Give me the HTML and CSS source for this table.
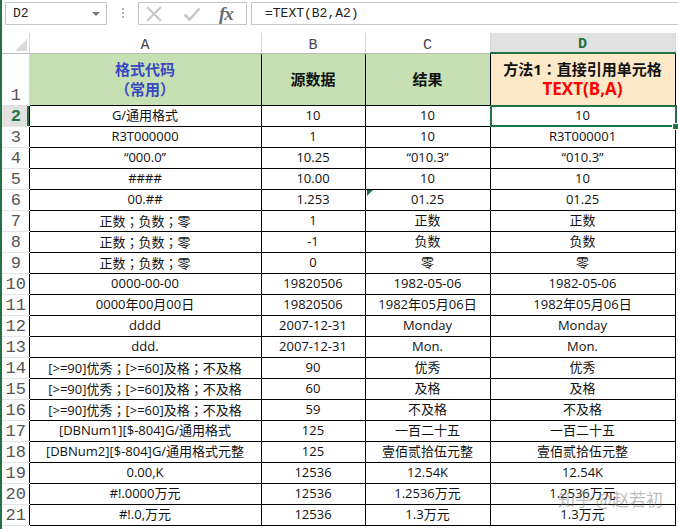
FILE: index.html
```html
<!DOCTYPE html>
<html>
<head>
<meta charset="utf-8">
<link rel="stylesheet" href="styles.css">
</head>
<body>
<div class="app">
  <div class="fbar">
    <div class="namebox"><span>D2</span><span class="nb-arrow"></span></div>
    <div class="grip"><i></i><i></i><i></i></div>
    <div class="fxbox">
      <svg class="ico" width="18" height="18" viewBox="0 0 18 18"><path d="M2 2 L16 16 M16 2 L2 16" stroke="#c8c8c8" stroke-width="2.2" fill="none"/></svg>
      <svg class="ico" width="18" height="18" viewBox="0 0 18 18"><path d="M1.5 9.5 L6.5 14.5 L16.5 3.5" stroke="#c8c8c8" stroke-width="2.6" fill="none"/></svg>
      <span class="fx">fx</span>
    </div>
    <div class="formula">=TEXT(B2,A2)</div>
  </div>
  <table class="sheet">
    <colgroup>
      <col class="c-rh"><col class="c-a"><col class="c-b"><col class="c-c"><col class="c-d">
    </colgroup>
    <thead>
      <tr class="colhdr">
        <th class="corner"><svg width="12" height="12" viewBox="0 0 12 12"><path d="M12 0 L12 12 L0 12 Z" fill="#d9d9d9"/></svg></th>
        <th>A</th><th>B</th><th>C</th><th class="hsel">D</th>
      </tr>
    </thead>
    <tbody>
      <tr class="r1">
        <th class="rh">1</th>
        <td class="hg blue">格式代码<br><span class="fw">（</span>常用<span class="fw">）</span></td>
        <td class="hg">源数据</td>
        <td class="hg">结果</td>
        <td class="ho">方法1<span class="fw">：</span>直接引用单元格<br><span class="red">TEXT(B,A)</span></td>
      </tr>
      <tr><th class="rh rsel">2</th><td>G/通用格式</td><td>10</td><td>10</td><td class="active">10</td></tr>
      <tr><th class="rh">3</th><td>R3T000000</td><td>1</td><td>10</td><td>R3T000001</td></tr>
      <tr><th class="rh">4</th><td>“000.0”</td><td>10.25</td><td>“010.3”</td><td>“010.3”</td></tr>
      <tr><th class="rh">5</th><td>####</td><td>10.00</td><td>10</td><td>10</td></tr>
      <tr><th class="rh">6</th><td>00.##</td><td>1.253</td><td class="err">01.25</td><td>01.25</td></tr>
      <tr><th class="rh">7</th><td>正数<span class="fw">；</span>负数<span class="fw">；</span>零</td><td>1</td><td>正数</td><td>正数</td></tr>
      <tr><th class="rh">8</th><td>正数<span class="fw">；</span>负数<span class="fw">；</span>零</td><td>-1</td><td>负数</td><td>负数</td></tr>
      <tr><th class="rh">9</th><td>正数<span class="fw">；</span>负数<span class="fw">；</span>零</td><td>0</td><td>零</td><td>零</td></tr>
      <tr><th class="rh">10</th><td>0000-00-00</td><td>19820506</td><td>1982-05-06</td><td>1982-05-06</td></tr>
      <tr><th class="rh">11</th><td>0000年00月00日</td><td>19820506</td><td>1982年05月06日</td><td>1982年05月06日</td></tr>
      <tr><th class="rh">12</th><td>dddd</td><td>2007-12-31</td><td>Monday</td><td>Monday</td></tr>
      <tr><th class="rh">13</th><td>ddd.</td><td>2007-12-31</td><td>Mon.</td><td>Mon.</td></tr>
      <tr><th class="rh">14</th><td>[&gt;=90]优秀<span class="fw">；</span>[&gt;=60]及格<span class="fw">；</span>不及格</td><td>90</td><td>优秀</td><td>优秀</td></tr>
      <tr><th class="rh">15</th><td>[&gt;=90]优秀<span class="fw">；</span>[&gt;=60]及格<span class="fw">；</span>不及格</td><td>60</td><td>及格</td><td>及格</td></tr>
      <tr><th class="rh">16</th><td>[&gt;=90]优秀<span class="fw">；</span>[&gt;=60]及格<span class="fw">；</span>不及格</td><td>59</td><td>不及格</td><td>不及格</td></tr>
      <tr><th class="rh">17</th><td>[DBNum1][$-804]G/通用格式</td><td>125</td><td>一百二十五</td><td>一百二十五</td></tr>
      <tr><th class="rh">18</th><td>[DBNum2][$-804]G/通用格式元整</td><td>125</td><td>壹佰贰拾伍元整</td><td>壹佰贰拾伍元整</td></tr>
      <tr><th class="rh">19</th><td>0.00,K</td><td>12536</td><td>12.54K</td><td>12.54K</td></tr>
      <tr><th class="rh">20</th><td>#!.0000万元</td><td>12536</td><td>1.2536万元</td><td>1.2536万元</td></tr>
      <tr><th class="rh">21</th><td>#!.0,万元</td><td>12536</td><td>1.3万元</td><td>1.3万元</td></tr>
    </tbody>
  </table>
  <div class="watermark">知乎 @赵若初</div>
</div>
</body>
</html>
```
FILE: styles.css
```css
html, body {
  margin: 0;
  padding: 0;
}
body {
  width: 678px;
  height: 529px;
  overflow: hidden;
  background: #fff;
}
.app {
  position: relative;
  height: 529px;
  border-left: 2px solid #217346;
  box-sizing: border-box;
  background: #fff;
}
.fbar {
  height: 33px;
  display: flex;
  align-items: flex-start;
  padding-top: 2px;
  box-sizing: border-box;
}
.namebox {
  margin-left: 3px;
  width: 102px;
  height: 23px;
  border: 1px solid #c6c6c6;
  box-sizing: border-box;
  display: flex;
  align-items: center;
  justify-content: space-between;
  padding: 0 6px 0 7px;
  font: 13px "Liberation Mono", monospace;
  color: #222;
}
.nb-arrow {
  width: 0;
  height: 0;
  border-left: 4px solid transparent;
  border-right: 4px solid transparent;
  border-top: 4px solid #7a7a7a;
}
.grip {
  width: 31px;
  display: flex;
  flex-direction: column;
  align-items: center;
  gap: 2px;
  padding-top: 6px;
}
.grip i {
  display: block;
  width: 2px;
  height: 2px;
  background: #b4b4b4;
}
.fxbox {
  width: 109px;
  height: 23px;
  border: 1px solid #c6c6c6;
  box-sizing: border-box;
  display: flex;
  align-items: center;
  padding-left: 6px;
  gap: 20px;
}
.ico {
  display: block;
}
.fx {
  font: italic bold 19px "Liberation Serif", serif;
  color: #6a6a6a;
  margin-left: -2px;
  letter-spacing: -1px;
}
.formula {
  flex: 1;
  height: 23px;
  margin-left: 4px;
  border: 1px solid #c6c6c6;
  border-right: none;
  box-sizing: border-box;
  padding-left: 13px;
  font: 13px/21px "Liberation Mono", monospace;
  color: #222;
}
.sheet {
  border-collapse: collapse;
  table-layout: fixed;
  width: 673px;
  font: 13px "Open Sans", "Noto Sans CJK SC", sans-serif;
  color: #111;
}
.c-rh { width: 27px; }
.c-a { width: 232px; }
.c-b { width: 104px; }
.c-c { width: 125px; }
.c-d { width: 185px; }
.colhdr { height: 20px; }
.colhdr th {
  padding: 0;
  font: normal 15px/15px "Liberation Mono", monospace;
  color: #444;
  border-right: 1px solid #d8d8d8;
  border-bottom: 1px solid #bcbcbc;
  background: #fff;
  vertical-align: bottom;
}
.colhdr th.corner {
  text-align: right;
  line-height: 0;
  padding: 0 2px 2px 0;
}
.colhdr th.hsel {
  background: #e1e1e1;
  color: #217346;
  font-weight: bold;
  border-bottom: 2px solid #217346;
}
tbody tr { height: 21px; }
tbody tr.r1 { height: 52px; }
.rh {
  padding: 0 0 0 1px;
  font: normal 17px/19px "Liberation Mono", monospace;
  color: #555;
  text-align: center;
  vertical-align: bottom;
  border-right: none;
  border-bottom: 1px solid #e4e4e4;
  background: #fff;
}
.r1 .rh {
  border-right: 1px solid #d8d8d8;
}
.rh.rsel {
  background: #e1e1e1;
  color: #217346;
  font-weight: bold;
  box-shadow: inset -2px 0 0 #217346;
}
tbody td {
  padding: 0;
  text-align: center;
  vertical-align: middle;
  line-height: 19px;
  border: 1px solid #000;
  white-space: nowrap;
}
.fw {
  font-family: "Noto Sans CJK TC", sans-serif;
}
.r1 td {
  font-size: 15px;
  font-weight: bold;
  line-height: 19px;
  color: #111;
}
.hg { background: #c6e0b4; }
.ho { background: #fde8c8; }
.blue { color: #3848c0 !important; }
.red {
  color: #ff0000;
  font-size: 17px;
}
td.active, td.err {
  position: relative;
}
td.active::after {
  content: "";
  position: absolute;
  left: -1px;
  top: -1px;
  right: -2px;
  bottom: -1px;
  border: 2px solid #217346;
}
td.active::before {
  content: "";
  position: absolute;
  right: -4px;
  bottom: -4px;
  width: 5px;
  height: 5px;
  background: #217346;
  border: 1px solid #fff;
  z-index: 2;
}
td.err::before {
  content: "";
  position: absolute;
  left: 1px;
  top: 0;
  width: 0;
  height: 0;
  border-top: 6px solid #217346;
  border-right: 6px solid transparent;
}
.watermark {
  position: absolute;
  left: 556px;
  top: 488px;
  font: 17px/22px "Noto Sans CJK SC", sans-serif;
  color: rgba(120, 120, 120, 0.5);
  white-space: nowrap;
}
```
